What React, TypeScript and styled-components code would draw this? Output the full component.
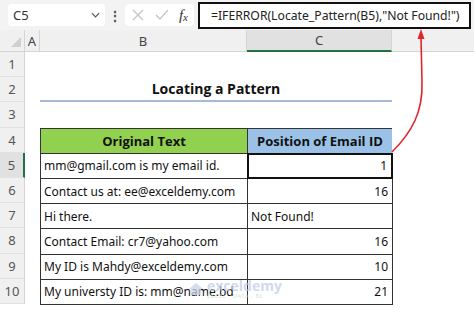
import styled, { createGlobalStyle } from 'styled-components';

const GlobalStyle = createGlobalStyle`
  html, body {
    margin: 0;
    padding: 0;
    background: #ffffff;
  }
  body {
    width: 474px;
    height: 309px;
    overflow: hidden;
    font-family: 'Noto Sans', 'Open Sans', sans-serif;
  }
`;

const rows = [
  { text: 'mm@gmail.com is my email id.', value: '1' },
  { text: 'Contact us at: ee@exceldemy.com', value: '16' },
  { text: 'Hi there.', value: 'Not Found!' },
  { text: 'Contact Email: cr7@yahoo.com', value: '16' },
  { text: 'My ID is Mahdy@exceldemy.com', value: '10' },
  { text: 'My universty ID is: mm@name.bd', value: '21' },
];

const App: React.FC = () => {
  return (
    <Screen>
      <GlobalStyle />
      <FormulaBar>
        <NameBox>
          <span>C5</span>
          <Chevron viewBox="0 0 10 6">
            <path d="M1 1 L5 5 L9 1" />
          </Chevron>
        </NameBox>
        <Dots>⋮</Dots>
        <ActionBox>
          <svg width="14" height="14" viewBox="0 0 14 14">
            <path d="M2 2 L12 12 M12 2 L2 12" stroke="#c4c4c4" strokeWidth="1.3" />
          </svg>
          <svg width="16" height="14" viewBox="0 0 16 14">
            <path d="M2 7 L6 11 L14 2" stroke="#c4c4c4" strokeWidth="1.3" fill="none" />
          </svg>
          <Fx>
            f<sub>x</sub>
          </Fx>
        </ActionBox>
        <FormulaInput>=IFERROR(Locate_Pattern(B5),"Not Found!")</FormulaInput>
      </FormulaBar>

      <Sheet>
        <Corner>
          <svg width="10" height="10" viewBox="0 0 10 10">
            <path d="M10 0 L10 10 L0 10 Z" fill="#cfcfcf" />
          </svg>
        </Corner>
        <ColHead>A</ColHead>
        <ColHead>B</ColHead>
        <ColHead $active>C</ColHead>
        <ColHead $last />

        {Array.from({ length: 10 }, (_, i) => {
          const n = i + 1;
          const data = n >= 5 ? rows[n - 5] : null;
          return (
            <Row key={n}>
              <RowHead $active={n === 5}>{n}</RowHead>
              <Cell />
              {n === 2 && <Title>Locating a Pattern</Title>}
              {n === 4 && (
                <>
                  <HeadCell $bg="#92d050">Original Text</HeadCell>
                  <HeadCell $bg="#9bc2e6">Position of Email ID</HeadCell>
                </>
              )}
              {data && (
                <>
                  <DataCell>{data.text}</DataCell>
                  <DataCell $num={data.value !== 'Not Found!'} $selected={n === 5}>
                    {data.value}
                  </DataCell>
                </>
              )}
              {n !== 2 && n !== 4 && !data && (
                <>
                  <Cell />
                  <Cell />
                </>
              )}
              <Cell />
            </Row>
          );
        })}
      </Sheet>

      <Watermark>
        <svg width="16" height="14" viewBox="0 0 16 14">
          <path d="M8 1 L15 7 L13 7 L13 13 L3 13 L3 7 L1 7 Z" fill="#c9d3e6" />
        </svg>
        <WatermarkText>
          <span>exceldemy</span>
          <small>EXCEL · DATA · BI</small>
        </WatermarkText>
      </Watermark>

      <Arrow width="474" height="309" viewBox="0 0 474 309">
        <path
          d="M392 152 C 412 132, 423 112, 422 82 L 421 38"
          stroke="#e0262b"
          strokeWidth="1.6"
          fill="none"
        />
        <path d="M421 29 L417.5 39 L424.5 39 Z" fill="#e0262b" />
      </Arrow>
    </Screen>
  );
};
export default App;

const Screen = styled.div`
  position: relative;
  width: 474px;
  height: 309px;
  background: #ffffff;
  overflow: hidden;
`;

const FormulaBar = styled.div`
  display: flex;
  align-items: center;
  height: 30px;
  padding: 0 3px 0 8px;
  background: #f3f3f3;
  box-sizing: border-box;
`;

const NameBox = styled.div`
  display: flex;
  align-items: center;
  justify-content: space-between;
  width: 97px;
  height: 22px;
  padding: 0 5px 0 5px;
  box-sizing: border-box;
  background: #ffffff;
  border-radius: 4px;
  font-size: 13px;
  color: #333333;
`;

const Chevron = styled.svg`
  width: 9px;
  height: 6px;
  fill: none;
  stroke: #555555;
  stroke-width: 1.3;
`;

const Dots = styled.span`
  width: 20px;
  text-align: center;
  font-size: 14px;
  font-weight: bold;
  color: #555555;
`;

const ActionBox = styled.div`
  display: flex;
  align-items: center;
  gap: 9px;
  width: 69px;
  height: 22px;
  padding: 0 6px;
  box-sizing: border-box;
  background: #ffffff;
  border-radius: 4px;
`;

const Fx = styled.span`
  font-family: 'Liberation Serif', serif;
  font-style: italic;
  font-size: 15px;
  color: #333333;

  sub {
    font-size: 11px;
    vertical-align: -1px;
  }
`;

const FormulaInput = styled.div`
  display: flex;
  align-items: center;
  flex: 1;
  height: 27px;
  margin-left: 4px;
  padding-left: 11px;
  box-sizing: border-box;
  border: 2px solid #111111;
  background: #ffffff;
  font-size: 12.2px;
  color: #222222;
  white-space: nowrap;
  overflow: hidden;
`;

const Sheet = styled.div`
  display: grid;
  grid-template-columns: 25px 15px 207px 145px 1fr;
  grid-template-rows: 22px repeat(10, 25.2px);
`;

const Row = styled.div`
  display: contents;
`;

const Corner = styled.div`
  display: flex;
  align-items: flex-end;
  justify-content: flex-end;
  padding: 0 3px 4px 0;
  background: #f0f0f0;
  border-bottom: 1px solid #d4d4d4;
  border-right: 1px solid #d4d4d4;
`;

const ColHead = styled.div<{ $active?: boolean; $last?: boolean }>`
  display: flex;
  align-items: center;
  justify-content: center;
  background: ${(p) => (p.$active ? '#e1e1e1' : '#f0f0f0')};
  border-right: ${(p) => (p.$last ? 'none' : '1px solid #d4d4d4')};
  border-bottom: ${(p) => (p.$active ? '2px solid #217346' : '1px solid #d4d4d4')};
  font-size: 13px;
  color: #444444;
`;

const RowHead = styled.div<{ $active?: boolean }>`
  display: flex;
  align-items: center;
  justify-content: center;
  background: ${(p) => (p.$active ? '#e1e1e1' : '#f0f0f0')};
  border-right: ${(p) => (p.$active ? '2px solid #217346' : '1px solid #d4d4d4')};
  border-bottom: 1px solid #e2e2e2;
  font-size: 13px;
  color: #555555;
`;

const Cell = styled.div`
  background: #ffffff;
`;

const Title = styled.div`
  grid-column: 3 / 5;
  display: flex;
  align-items: center;
  justify-content: center;
  border-bottom: 2px solid #a9b8d6;
  font-family: 'Open Sans', sans-serif;
  font-weight: bold;
  font-size: 14px;
  color: #111111;
`;

const HeadCell = styled.div<{ $bg: string }>`
  display: flex;
  align-items: center;
  justify-content: center;
  background: ${(p) => p.$bg};
  border: 1px solid #333333;
  margin: 0 -1px -1px 0;
  font-family: 'Open Sans', sans-serif;
  font-weight: bold;
  font-size: 13px;
  color: #111111;
`;

const DataCell = styled.div<{ $num?: boolean; $selected?: boolean }>`
  position: relative;
  display: flex;
  align-items: center;
  justify-content: ${(p) => (p.$num ? 'flex-end' : 'flex-start')};
  padding: 0 4px 0 3px;
  border: ${(p) => (p.$selected ? '2px solid #111111' : '1px solid #333333')};
  margin: 0 -1px -1px 0;
  z-index: ${(p) => (p.$selected ? 1 : 0)};
  background: #ffffff;
  font-size: 12px;
  color: #111111;
  white-space: nowrap;
`;

const Watermark = styled.div`
  position: absolute;
  left: 188px;
  top: 279px;
  display: flex;
  align-items: center;
  gap: 3px;
  opacity: 0.75;
  pointer-events: none;
`;

const WatermarkText = styled.div`
  display: flex;
  flex-direction: column;
  line-height: 1;

  span {
    font-family: 'Open Sans', sans-serif;
    font-weight: bold;
    font-size: 14px;
    color: #c2cde6;
  }

  small {
    font-size: 6px;
    letter-spacing: 0.5px;
    color: #cdd3dc;
  }
`;

const Arrow = styled.svg`
  position: absolute;
  left: 0;
  top: 0;
  pointer-events: none;
`;
